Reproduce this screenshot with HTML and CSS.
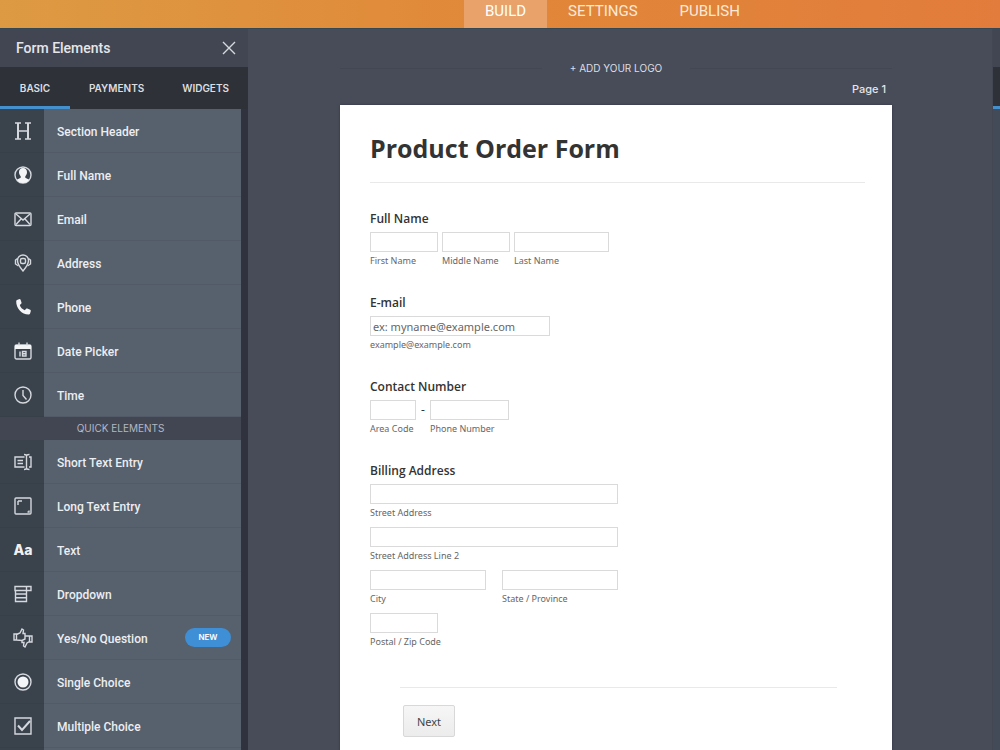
FILE: index.html
```html
<!DOCTYPE html>
<html lang="en">
<head>
    <meta charset="UTF-8">
    <title>Form Builder</title>
    <link rel="stylesheet" href="styles.css">
</head>
<body>
    <nav class="topbar">
        <a class="active" href="#build">BUILD</a>
        <a href="#settings">SETTINGS</a>
        <a href="#publish">PUBLISH</a>
    </nav>

    <div class="builder">
        <aside class="panel">
            <header class="panel-header">
                <h2>Form Elements</h2>
                <button class="close" type="button" aria-label="Close">
                    <svg width="14" height="14" viewBox="0 0 14 14"><path d="M1 1l12 12M13 1L1 13"/></svg>
                </button>
            </header>
            <div class="tabs">
                <button class="active" type="button">BASIC</button>
                <button type="button">PAYMENTS</button>
                <button type="button">WIDGETS</button>
            </div>

            <div class="elements">
                <button class="element" type="button">
                    <span class="icon"><svg viewBox="0 0 18 18"><path d="M1 1h6M11 1h6M1 17h6M11 17h6M4 9h10"/><path stroke-width="2" d="M4 1v16M14 1v16"/></svg></span>
                    <span class="name">Section Header</span>
                </button>
                <button class="element" type="button">
                    <span class="icon"><svg viewBox="0 0 18 18"><circle cx="9" cy="9" r="8"/><path class="solid" d="M9 2c2.600 0 4 1.800 4 4.200 0 1.900-.9 3.100-1.700 4v1.600l4 1.900C13.500 16 11.500 17 9 17s-4.500-1-6.300-3.300l4-1.900v-1.600C5.900 9.300 5 8.100 5 6.200 5 3.800 6.400 2 9 2z"/></svg></span>
                    <span class="name">Full Name</span>
                </button>
                <button class="element" type="button">
                    <span class="icon"><svg viewBox="0 0 18 18"><rect x="1" y="3" width="16" height="12.500" rx="1"/><path d="M2 4l7 6 7-6M2 14.500l5-5.500M16 14.500L11 9"/></svg></span>
                    <span class="name">Email</span>
                </button>
                <button class="element" type="button">
                    <span class="icon"><svg viewBox="0 0 18 18"><path d="M9 17C6.500 14 3.500 10.500 3.500 6.500a5.500 5.500 0 0 1 11 0c0 4-3 7.500-5.500 10.500z"/><rect x="6.500" y="4.500" width="5" height="5" rx="1.500"/><path d="M3.500 4.500L1.500 6v4L4.500 12M14.500 4.500l2 1.500v4L13.500 12"/></svg></span>
                    <span class="name">Address</span>
                </button>
                <button class="element" type="button">
                    <span class="icon"><svg viewBox="0 0 18 18"><path class="solid" d="M3 2l2.500-1c.5 0 .8.200 1 .6l1 3c.1.500 0 .9-.3 1.200L5.800 7c.7 2.300 2.500 4.300 5 5.300l1.300-1.500c.3-.3.700-.4 1.200-.3l2.900 1.300c.5.200.7.600.6 1.100l-.7 2.600c-.2.500-.5.800-1 .9C8 16.700 2 10.500 2.200 3.200c0-.6.300-1 .8-1.200z"/></svg></span>
                    <span class="name">Phone</span>
                </button>
                <button class="element" type="button">
                    <span class="icon"><svg viewBox="0 0 18 18"><rect x="1" y="3" width="16" height="14" rx="1.500"/><path class="solid" d="M1 3h16v4H1z"/><path d="M5 0.500v3M13 0.500v3M6 9.500v5M8.500 9.500h3.500v4.500H8.500zM8.500 11.800H12"/></svg></span>
                    <span class="name">Date Picker</span>
                </button>
                <button class="element" type="button">
                    <span class="icon"><svg viewBox="0 0 18 18"><circle cx="9" cy="9" r="8"/><path d="M9 4v5.500l3.500 4"/></svg></span>
                    <span class="name">Time</span>
                </button>

                <h3>QUICK ELEMENTS</h3>

                <button class="element" type="button">
                    <span class="icon"><svg viewBox="0 0 18 18"><path d="M10.500 4H1v10h9.500M3.500 7.500H9M3.500 10.500H9M15 4h2v10h-2M10 1.500c1.500 0 2.500.5 2.500 1.500v12c0 1-1 1.500-2.500 1.500M15.500 1.500c-1.500 0-3 .5-3 1.500M15.500 16.500c-1.500 0-3-.5-3-1.500"/></svg></span>
                    <span class="name">Short Text Entry</span>
                </button>
                <button class="element" type="button">
                    <span class="icon"><svg viewBox="0 0 18 18"><rect x="1" y="1" width="16" height="16" rx="1"/><path d="M4 4h4M4 4v4M15 13.500v1.500H13.500"/></svg></span>
                    <span class="name">Long Text Entry</span>
                </button>
                <button class="element" type="button">
                    <span class="icon letters">Aa</span>
                    <span class="name">Text</span>
                </button>
                <button class="element" type="button">
                    <span class="icon"><svg viewBox="0 0 18 18"><path d="M1 1.500h16v4H1zM12.500 1.500v4M1.500 5.500v11h11v-11M1.500 9h11M1.500 12.700h11"/></svg></span>
                    <span class="name">Dropdown</span>
                </button>
                <button class="element" type="button">
                    <span class="icon"><svg viewBox="0 0 18 18"><path d="M0 5h2.500v6H0zM2.500 5.500L6 4l2-4 1.500 1-.5 3.500h2v5.500l-3 1.500-5.500-.5M18 13h-2.500V7H18zM15.500 12.500L13 14l-2 4-1.500-1 .5-3.500H8V11M11 7h4.500"/></svg></span>
                    <span class="name">Yes/No Question</span>
                    <span class="badge">NEW</span>
                </button>
                <button class="element" type="button">
                    <span class="icon"><svg viewBox="0 0 18 18"><circle cx="9" cy="9" r="8"/><circle class="solid" cx="9" cy="9" r="5.500"/></svg></span>
                    <span class="name">Single Choice</span>
                </button>
                <button class="element" type="button">
                    <span class="icon"><svg viewBox="0 0 18 18"><path d="M1 1h16v16H1z"/><path stroke-width="2" d="M4 8.500l4 4.500 8-9"/></svg></span>
                    <span class="name">Multiple Choice</span>
                </button>
            </div>
        </aside>

        <main class="canvas">
            <div class="page">
                <button class="add-logo" type="button">+ ADD YOUR LOGO</button>
                <div class="page-number">Page 1</div>

                <form class="sheet">
                    <h1>Product Order Form</h1>

                    <fieldset>
                        <legend>Full Name</legend>
                        <div class="row">
                            <label class="small"><input type="text"><span>First Name</span></label>
                            <label class="small"><input type="text"><span>Middle Name</span></label>
                            <label class="last-name"><input type="text"><span>Last Name</span></label>
                        </div>
                    </fieldset>

                    <fieldset>
                        <legend>E-mail</legend>
                        <label class="email"><input type="email" placeholder="ex: myname@example.com"><span>example@example.com</span></label>
                    </fieldset>

                    <fieldset>
                        <legend>Contact Number</legend>
                        <div class="row">
                            <label class="area"><input type="text"><span>Area Code</span></label>
                            <span class="dash">-</span>
                            <label class="phone"><input type="tel"><span>Phone Number</span></label>
                        </div>
                    </fieldset>

                    <fieldset>
                        <legend>Billing Address</legend>
                        <div class="address">
                            <label class="wide"><input type="text"><span>Street Address</span></label>
                            <label class="wide"><input type="text"><span>Street Address Line 2</span></label>
                            <label><input type="text"><span>City</span></label>
                            <label><input type="text"><span>State / Province</span></label>
                            <label class="small"><input type="text"><span>Postal / Zip Code</span></label>
                        </div>
                    </fieldset>

                    <div class="actions">
                        <button type="button">Next</button>
                    </div>
                </form>
            </div>
        </main>

        <aside class="side"></aside>
    </div>
</body>
</html>
```
FILE: styles.css
```css
* { box-sizing: border-box; }
body { margin: 0; height: 100vh; overflow: hidden; display: flex; flex-direction: column; font-family: Inter, Roboto, sans-serif; color: #fff; background: #484c58; }
button { font: inherit; color: inherit; background: none; border: 0; padding: 0; cursor: pointer; }
svg { fill: none; stroke: #d5d9de; stroke-width: 1.4; }
svg .solid { fill: #f4f5f6; stroke: none; }

/* top navigation */
.topbar { flex: none; display: flex; height: 28px; padding-left: 464px; background: linear-gradient(90deg, #dd9a42, #e18838 50%, #e27c3c); }
.topbar a { height: 28px; padding: 0 21px; font-family: Roboto, sans-serif; font-size: 15px; line-height: 22px; color: #fbe9d8; text-decoration: none; }
.topbar a.active { background: #e8a26a; color: #fff; }

.builder { flex: 1; min-height: 0; display: flex; border-top: 1px solid #364754; }

/* left panel */
.panel { flex: none; width: 248px; display: flex; flex-direction: column; background: #30333e; }
.panel-header { flex: none; height: 38px; padding: 0 12px 0 16px; display: flex; align-items: center; justify-content: space-between; background: #424653; }
.panel-header h2 { margin: 0; font-family: Roboto, sans-serif; font-size: 14px; line-height: 18px; font-weight: 500; color: #e4e6ea; }
.close { display: flex; }
.tabs { flex: none; height: 42px; display: flex; background: #2e3137; }
.tabs button { flex: 1 0 auto; padding: 2px 2px 0; font-size: 10px; font-weight: 600; color: #dcdde0; border-bottom: 3px solid transparent; }
.tabs .active { flex: none; width: 70px; border-bottom-color: #4490ce; }
.elements { flex: 1; margin-right: 7px; overflow: hidden; background: linear-gradient(90deg, #3a424c 44px, #57606d 44px); }
.elements h3 { margin: 0; font-size: 10px; line-height: 23px; font-weight: 400; text-align: center; color: #b4b8c2; background: #424653; }
.element { display: flex; align-items: center; width: 100%; height: 44px; padding-right: 10px; border-bottom: 1px solid rgba(40, 46, 58, 0.12); text-align: left; }
.icon { flex: none; width: 44px; padding-left: 2px; display: flex; justify-content: center; }
.icon svg { width: 18px; height: 18px; overflow: visible; }
.letters { font-size: 14px; font-weight: 800; color: #f0f1f3; }
.name { flex: 1; padding: 2px 0 0 13px; font-family: Roboto, sans-serif; font-size: 12px; font-weight: 500; color: #eceef1; }
.badge { width: 46px; border-radius: 10px; background: #3f8fd6; font-size: 8px; font-weight: 600; line-height: 19px; text-align: center; }

/* form canvas */
.canvas { flex: 1; min-width: 0; padding-right: 8px; }
.page { width: 552px; height: 100%; margin: 0 auto; display: flex; flex-direction: column; }
.add-logo { flex: none; display: flex; align-items: center; gap: 28px; margin-top: 30px; font-size: 10px; line-height: 18px; color: #dddfe4; }
.add-logo::before, .add-logo::after { content: ""; flex: 1; border-top: 1px solid #434753; }
.page-number { padding: 4px 6px 0 0; font-size: 11px; font-weight: 500; line-height: 16px; text-align: right; color: #e3e5e9; }
.sheet { flex: 1; margin-top: 8px; padding: 0 27px 0 30px; background: #fff; color: #333; font-family: "Noto Sans", "Open Sans", sans-serif; box-shadow: 0 0 2px #2f3245; }
.sheet h1 { margin: 0 0 28px; padding: 26px 0 17px; font-family: "Open Sans", sans-serif; font-size: 25px; line-height: 34px; border-bottom: 1px solid #e9e9e9; }
fieldset { margin: 0 0 27px; padding: 0; border: 0; }
legend { padding: 0 0 5px; font-family: "Open Sans", sans-serif; font-size: 12px; line-height: 16px; font-weight: 600; }
label { display: block; min-width: 0; font-size: 9px; line-height: 14px; color: #666; white-space: nowrap; }
label span { display: block; margin-top: 2px; }
input { display: block; width: 100%; height: 20px; padding: 0 2px; border: 1px solid #dadada; background: #fff; font: 11px "Noto Sans", sans-serif; color: #555; }
input::placeholder { color: #666; }
.row { display: flex; gap: 4px; }
.small { width: 68px; }
.last-name { width: 95px; }
.email { width: 180px; }
.area { width: 46px; }
.phone { width: 79px; }
.dash { width: 6px; font-size: 12px; line-height: 20px; text-align: center; }
.address { display: grid; grid-template-columns: 1fr 1fr; gap: 7px 16px; width: 248px; }
.wide { grid-column: 1 / -1; }
.actions { margin: 38px 28px 0 30px; padding: 17px 3px; border-top: 1px solid #e9e9e9; }
.actions button { width: 52px; height: 32px; border: 1px solid #d8d8d8; border-radius: 2px; background: linear-gradient(#f6f6f6, #ececec); font-size: 11px; color: #444; }

/* edge of the right panel */
.side { flex: none; width: 8px; border-left: 1px solid #434753; background: linear-gradient(#424653 38px, #2e3137 38px, #2e3137 77px, #4490ce 77px, #4490ce 80px, #434b58 80px); }
```
